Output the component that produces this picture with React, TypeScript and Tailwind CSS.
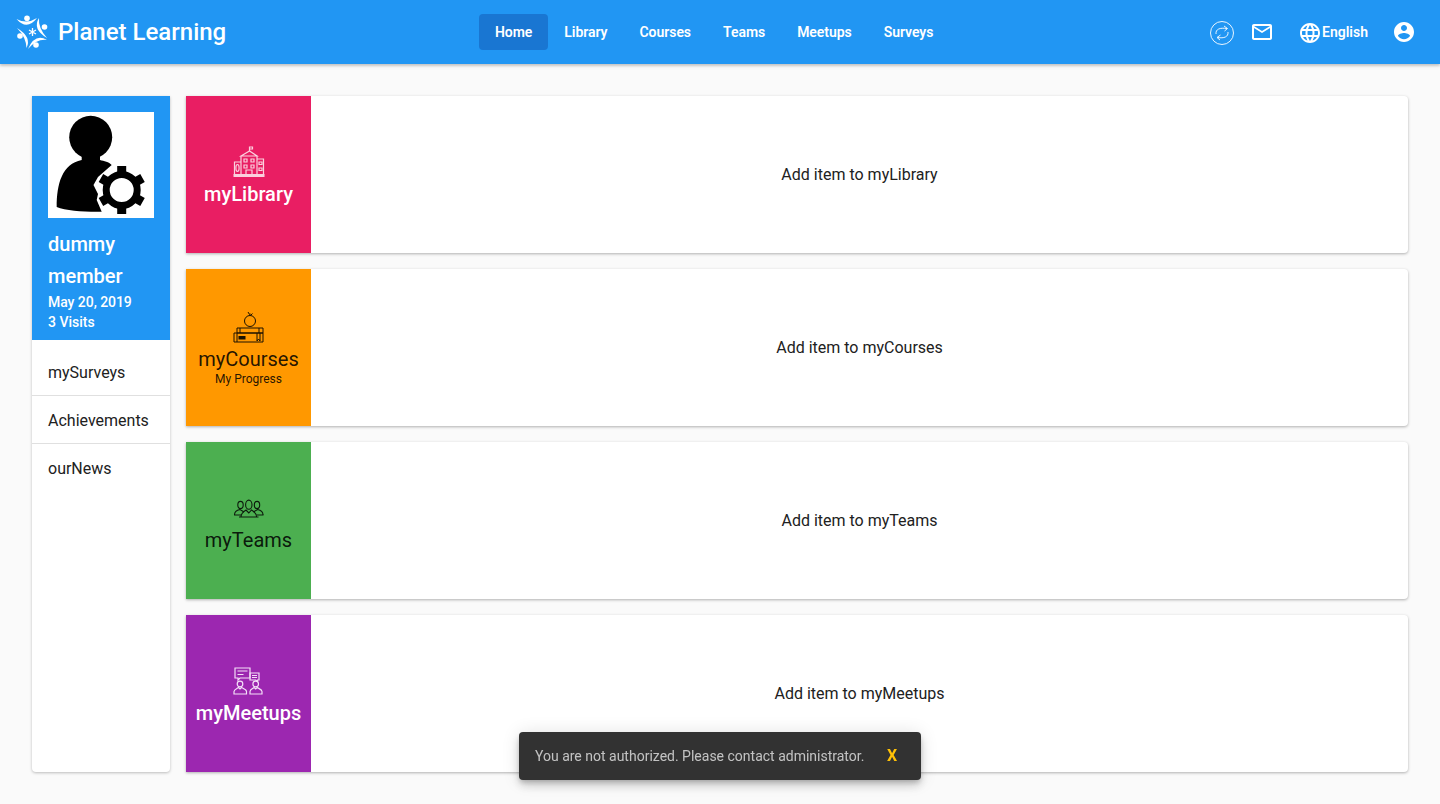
const LogoIcon = () => (
  <svg width="34" height="34" viewBox="0 0 34 34" fill="white">
    <circle cx="12" cy="3.2" r="2.8" />
    <circle cx="29.5" cy="12" r="2.8" />
    <circle cx="5" cy="21" r="2.8" />
    <circle cx="21" cy="30" r="2.8" />
    <path d="M1.5 4 Q12 16 22 3 Q12 9.5 1.5 4Z" />
    <path d="M24 3 Q17 14 32 23 Q23 13 24 3Z" />
    <path d="M32 25 Q20 18 13 34 Q22 23.5 32 25Z" />
    <path d="M11.5 33 Q17 22 2 13 Q11 22 11.5 33Z" />
    <path d="M17.5 13 v8 M14 15 l7 4 M21 15 l-7 4" stroke="white" strokeWidth="1.3" fill="none" />
  </svg>
)

const SyncIcon = () => (
  <svg width="24" height="24" viewBox="0 0 24 24" fill="none" stroke="white" strokeWidth="0.9" className="mt-0.5">
    <circle cx="12" cy="12" r="11.5" />
    <path d="M6 13 C5.5 8 10 6.5 17 7.5 M14 5 L17.5 7.5 L14.5 10" />
    <path d="M18 11 C18.5 16 14 17.5 7.5 16.5 M10.5 14 L7 16.5 L10 19" />
  </svg>
)

const MailIcon = () => (
  <svg width="24" height="24" viewBox="0 0 24 24" fill="white">
    <path d="M20 4H4c-1.1 0-1.99.9-1.99 2L2 18c0 1.1.9 2 2 2h16c1.1 0 2-.9 2-2V6c0-1.1-.9-2-2-2zm0 14H4V8l8 5 8-5v10zm-8-7L4 6h16l-8 5z" />
  </svg>
)

const LanguageIcon = () => (
  <svg width="24" height="24" viewBox="0 0 24 24" fill="white" className="mt-0.5">
    <path d="M11.99 2C6.47 2 2 6.48 2 12s4.47 10 9.99 10C17.52 22 22 17.52 22 12S17.52 2 11.99 2zm6.93 6h-2.95c-.32-1.25-.78-2.45-1.38-3.56 1.84.63 3.37 1.91 4.33 3.56zM12 4.04c.83 1.2 1.48 2.53 1.91 3.96h-3.82c.43-1.43 1.08-2.76 1.91-3.96zM4.26 14C4.1 13.36 4 12.69 4 12s.1-1.36.26-2h3.38c-.08.66-.14 1.32-.14 2 0 .68.06 1.34.14 2H4.26zm.82 2h2.95c.32 1.25.78 2.45 1.38 3.56-1.84-.63-3.37-1.9-4.33-3.56zm2.95-8H5.08c.96-1.66 2.49-2.93 4.33-3.56C8.81 5.55 8.35 6.75 8.03 8zM12 19.96c-.83-1.2-1.48-2.53-1.91-3.96h3.82c-.43 1.43-1.08 2.76-1.91 3.96zM14.34 14H9.66c-.09-.66-.16-1.32-.16-2 0-.68.07-1.35.16-2h4.68c.09.65.16 1.32.16 2 0 .68-.07 1.34-.16 2zm.25 5.56c.6-1.11 1.06-2.31 1.38-3.56h2.95c-.96 1.65-2.49 2.93-4.33 3.56zM16.36 14c.08-.66.14-1.32.14-2 0-.68-.06-1.34-.14-2h3.38c.16.64.26 1.31.26 2s-.1 1.36-.26 2h-3.38z" />
  </svg>
)

const AccountIcon = () => (
  <svg width="24" height="24" viewBox="0 0 24 24" fill="white">
    <path d="M12 2C6.48 2 2 6.48 2 12s4.48 10 10 10 10-4.48 10-10S17.52 2 12 2zm0 3c1.66 0 3 1.34 3 3s-1.34 3-3 3-3-1.34-3-3 1.34-3 3-3zm0 14.2c-2.5 0-4.71-1.28-6-3.22.03-1.99 4-3.08 6-3.08 1.99 0 5.97 1.09 6 3.08-1.29 1.94-3.5 3.22-6 3.22z" />
  </svg>
)

const Avatar = () => (
  <svg viewBox="0 0 106 106" className="w-[106px] h-[106px] bg-white">
    <circle cx="42.7" cy="25.3" r="21.5" fill="black" />
    <path d="M33.7 44 h18.3 v4 C56 49 61 50 63.7 53 L50 65 L45.5 73 L50 82 L48.7 88 L53.7 99.7 C38 100 18 99 8.7 95 C8.7 72 14 52 33.7 48 Z" fill="black" />
    <g transform="translate(73.7 78)">
      <circle r="15.5" fill="none" stroke="black" strokeWidth="7" />
      {[0, 60, 120, 180, 240, 300].map(a => (
        <rect key={a} x="-4.5" y="-24" width="9" height="7" fill="black" transform={`rotate(${a})`} />
      ))}
    </g>
  </svg>
)

const LibraryIcon = () => (
  <svg width="32" height="32" viewBox="0 0 32 32" fill="none" stroke="#fbd0de" strokeWidth="1.2">
    <path d="M16.5 5 V1 h3 v2 h-3" />
    <path d="M8 10 L16.5 5 L24 10 Z" />
    <path d="M8 10 V29 H24 V10 M8 16 H1.5 V29 H8 M24 13 H30.5 V29 H24" />
    <path d="M11 13 h3 v3 h-3z M18 13 h3 v3 h-3z M11 19 h3 v3 h-3z M18 19 h3 v3 h-3z M13 29 v-5 h6 v5 M26 16 h3 v2.5 h-3z M26 22 h3 v2.5 h-3z" />
    <rect x="0.5" y="28" width="31" height="3" fill="#fbd0de" stroke="none" />
    <ellipse cx="4.5" cy="22" rx="1.6" ry="3.5" />
  </svg>
)

const CoursesIcon = () => (
  <svg width="32" height="32" viewBox="0 0 32 32" fill="none" stroke="#1c1300" strokeWidth="1">
    <circle cx="17" cy="10" r="5.5" />
    <path d="M17 4.5 V2.5 M19.5 2.5 l-2 2 M15 1 l1.5 2.5" />
    <path d="M4 17 h26 v5 H4 z" />
    <path d="M1 22 h29 v9 H1 z" />
    <path d="M7 17 v5 M26 17 v5 M4 22 v9 M24 22 v8 l1.5 -2 l1.5 2 v-8" />
    <rect x="6" y="25.5" width="6" height="2.5" fill="#1c1300" />
  </svg>
)

const TeamsIcon = () => (
  <svg width="32" height="32" viewBox="0 0 32 32" fill="none" stroke="#0c1a0c" strokeWidth="1.1">
    <ellipse cx="7.5" cy="13" rx="2.7" ry="3.6" />
    <ellipse cx="15.8" cy="12.7" rx="3.2" ry="4.6" />
    <ellipse cx="24" cy="13" rx="2.7" ry="3.6" />
    <path d="M1.5 23 C1.5 19.5 4 18 7 17.5 L11 20 M30 23 C30 19.5 27.5 18 24.5 17.5 L20.5 20" />
    <path d="M8 25 C8 21.5 10.5 19.5 13 18 L15.8 21 L18.5 18 C21 19.5 23.5 21.5 23.5 25" />
    <path d="M1 23 h7 M23.5 23 h7 M6 25 h19.5" />
  </svg>
)

const MeetupsIcon = () => (
  <svg width="32" height="32" viewBox="0 0 32 32" fill="none" stroke="#f3dff7" strokeWidth="1.2">
    <path d="M2 3 h15 v10 h-10 l-2 2 v-2 h-3 z" />
    <path d="M4.5 6 h10 M4.5 9.5 h6" />
    <path d="M17 8 h9 v7 h-1.5 v1.5 l-2 -1.5 h-5.5 z" />
    <path d="M19 10.5 h5 M19 12.5 h5" />
    <circle cx="7" cy="19" r="2.8" />
    <circle cx="22.7" cy="19" r="2.8" />
    <path d="M1 29 v-2.5 C1 24.5 4 23.5 5.5 22.5 L7 24 L8.5 22.5 C10 23.5 13.5 24.5 13.5 26.5 v2.5 Z" />
    <path d="M17 29 v-2.5 C17 24.5 20 23.5 21.2 22.5 L22.7 24 L24.2 22.5 C25.5 23.5 29 24.5 29 26.5 v2.5 Z" />
  </svg>
)

const navLinks = ['Home', 'Library', 'Courses', 'Teams', 'Meetups', 'Surveys']

const cards = [
  { title: 'myLibrary', color: 'bg-[#e91e63] text-white font-medium', Icon: LibraryIcon },
  { title: 'myCourses', sub: 'My Progress', color: 'bg-[#ff9800] text-black/87', Icon: CoursesIcon },
  { title: 'myTeams', color: 'bg-[#4caf50] text-black/87', Icon: TeamsIcon },
  { title: 'myMeetups', color: 'bg-[#9c27b0] text-white font-medium', Icon: MeetupsIcon },
]

export default function App() {
  return (
    <div className="h-screen flex flex-col bg-[#fafafa] text-[#212121] font-['Roboto',sans-serif] overflow-hidden">
      {/* Toolbar */}
      <header className="relative z-10 h-16 shrink-0 bg-[#2196f3] text-white flex items-center pl-[15px] pr-6 shadow-[0_2px_2px_rgba(0,0,0,0.14),0_1px_5px_rgba(0,0,0,0.12)]">
        <div className="flex items-center gap-[9px] w-[464px]">
          <LogoIcon />
          <span className="text-[24px] font-medium leading-8">Planet Learning</span>
        </div>
        <nav className="flex items-center">
          {navLinks.map(link => (
            <a key={link} className={`h-9 px-4 flex items-center rounded text-sm font-semibold tracking-[-0.05px] ${link === 'Home' ? 'bg-[#1976d2]' : ''}`}>
              {link}
            </a>
          ))}
        </nav>
        <div className="ml-auto flex items-center">
          <SyncIcon />
          <span className="ml-4"><MailIcon /></span>
          <span className="ml-6"><LanguageIcon /></span>
          <span className="text-sm font-semibold">English</span>
          <span className="ml-6"><AccountIcon /></span>
        </div>
      </header>

      <main className="flex-1 min-h-0 flex gap-4 p-8">
        {/* Profile sidebar */}
        <aside className="w-[138px] shrink-0 bg-white rounded-b shadow-[0_1px_3px_rgba(0,0,0,0.25)] overflow-hidden">
          <div className="h-[244px] bg-[#2196f3] text-white p-4">
            <Avatar />
            <div className="mt-[10px] text-[20px] font-medium leading-8">dummy member</div>
            <div className="text-sm font-medium leading-5 tracking-[-0.05px]">May 20, 2019</div>
            <div className="text-sm font-medium leading-5">3 Visits</div>
          </div>
          <ul className="pt-2">
            {['mySurveys', 'Achievements', 'ourNews'].map((item, i) => (
              <li key={item} className={`h-12 px-4 flex items-center text-base ${i < 2 ? 'pt-0.5 border-b border-[#e0e0e0]' : 'pt-px'}`}>
                {item}
              </li>
            ))}
          </ul>
        </aside>

        {/* Dashboard tiles */}
        <div className="flex-1 min-w-0 flex flex-col gap-4">
          {cards.map(card => (
            <section key={card.title} className="h-[157px] flex bg-white rounded-r overflow-hidden shadow-[0_1px_3px_rgba(0,0,0,0.3)]">
              <div className={`w-[125px] shrink-0 flex flex-col items-center justify-center ${card.sub ? '' : 'pt-[7px]'} ${card.color}`}>
                <card.Icon />
                <div className="text-[20px] leading-8">{card.title}</div>
                {card.sub && <div className="text-xs leading-3 -mt-0.5">{card.sub}</div>}
              </div>
              <div className="flex-1 flex items-center justify-center text-base">Add item to {card.title}</div>
            </section>
          ))}
        </div>
      </main>

      {/* Snackbar */}
      <div className="fixed left-[519px] bottom-6 w-[402px] h-12 bg-[#323232] rounded flex items-center justify-between pl-4 pr-[13px] text-sm text-white/70 shadow-[0_3px_5px_-1px_rgba(0,0,0,0.2),0_6px_10px_0_rgba(0,0,0,0.14),0_1px_18px_0_rgba(0,0,0,0.12)]">
        <span>You are not authorized. Please contact administrator.</span>
        <button className="w-8 text-center font-bold text-[#ffc107] text-base">X</button>
      </div>
    </div>
  )
}
